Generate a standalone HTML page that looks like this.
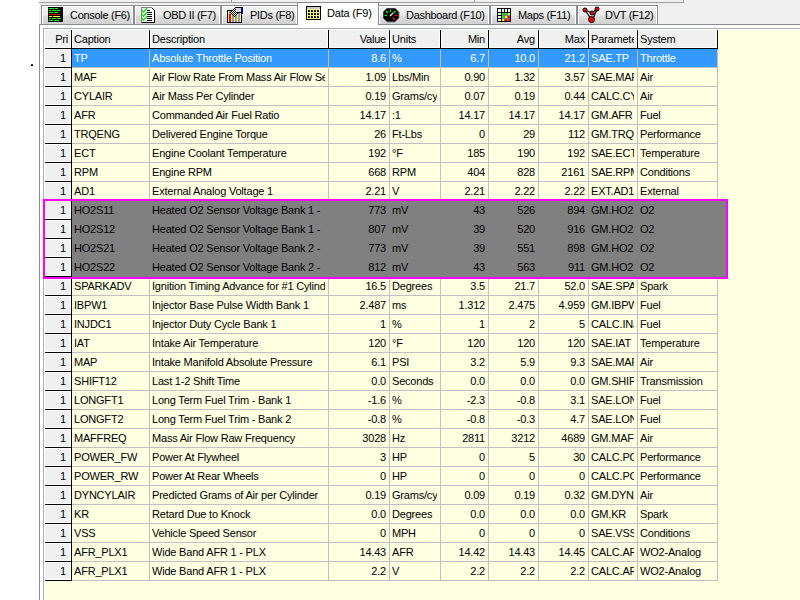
<!DOCTYPE html><html><head><meta charset="utf-8"><style>
*{margin:0;padding:0;box-sizing:border-box}
html,body{width:800px;height:600px;overflow:hidden;background:#fff}
body{position:relative;font-family:"Liberation Sans",sans-serif;font-size:11px;color:#000}
.a{position:absolute}
.t{position:absolute;white-space:nowrap;overflow:hidden;line-height:13px;height:13px;letter-spacing:-0.2px}
.r{text-align:right}
.fx{position:absolute;background:#f0f0f0;border-top:1px solid #fff;border-left:1px solid #fff;border-right:1px solid #fff;border-bottom:1px solid #fff}
.tab{position:absolute;top:5px;height:20px;border:1px solid #898c95;border-bottom:none;background:linear-gradient(#f2f2f2 0,#ebebeb 45%,#dddddd 55%,#cfcfcf 100%)}
.tab i{position:absolute;left:0;top:0;right:0;bottom:0;border-top:1px solid #fff;border-left:1px solid #fff;border-right:1px solid #fff}
.tl{position:absolute;top:3px;white-space:nowrap;line-height:13px;letter-spacing:-0.3px}
</style></head><body>
<div class="a" style="left:39px;top:0;width:761px;height:24px;background:#f0f0f0"></div>
<div class="a" style="left:39px;top:2px;width:645px;height:1px;background:#a0a0a0"></div>
<div class="a" style="left:39px;top:0;width:1px;height:2px;background:#fff"></div>
<div class="a" style="left:231px;top:0;width:1px;height:3px;background:#a0a0a0"></div>
<div class="a" style="left:474px;top:0;width:1px;height:3px;background:#a0a0a0"></div>
<div class="a" style="left:683px;top:0;width:1px;height:3px;background:#a0a0a0"></div>
<div class="tab" style="left:41px;width:93px"><i></i><span class="tl" style="left:28px">Console (F6)</span></div>
<div class="tab" style="left:134px;width:87px"><i></i><span class="tl" style="left:28px">OBD II (F7)</span></div>
<div class="tab" style="left:221px;width:77px"><i></i><span class="tl" style="left:28px">PIDs (F8)</span></div>
<div class="tab" style="left:378px;width:112px"><i></i><span class="tl" style="left:27px">Dashboard (F10)</span></div>
<div class="tab" style="left:490px;width:87px"><i></i><span class="tl" style="left:27px">Maps (F11)</span></div>
<div class="tab" style="left:577px;width:81px"><i></i><span class="tl" style="left:27px">DVT (F12)</span></div>
<div class="a" style="left:297px;top:2px;width:82px;height:23px;background:#fff;border:1px solid #898c95;border-bottom:none"><span class="tl" style="left:29px;top:4px;letter-spacing:-0.2px">Data (F9)</span></div>
<div class="a" style="left:39px;top:24px;width:761px;height:576px;border-left:1px solid #898c95;border-top:1px solid #898c95;background:#fff"></div>
<div class="a" style="left:298px;top:24px;width:80px;height:1px;background:#fff"></div>
<div class="a" style="left:43px;top:28px;width:757px;height:572px;border-left:1px solid #abadb3;border-top:1px solid #abadb3;background:#ffffe1"></div>
<div class="a" style="left:44px;top:29px;width:756px;height:571px;border-left:1px solid #fff;border-top:1px solid #fff"></div>
<div class="fx" style="left:44px;top:29px;width:27px;height:19px"></div>
<div class="a" style="left:71px;top:30px;width:1px;height:19px;background:#000"></div>
<div class="fx" style="left:72px;top:29px;width:77px;height:19px"></div>
<div class="a" style="left:149px;top:30px;width:1px;height:19px;background:#000"></div>
<div class="fx" style="left:150px;top:29px;width:178px;height:19px"></div>
<div class="a" style="left:328px;top:30px;width:1px;height:19px;background:#000"></div>
<div class="fx" style="left:329px;top:29px;width:60px;height:19px"></div>
<div class="a" style="left:389px;top:30px;width:1px;height:19px;background:#000"></div>
<div class="fx" style="left:390px;top:29px;width:50px;height:19px"></div>
<div class="a" style="left:440px;top:30px;width:1px;height:19px;background:#000"></div>
<div class="fx" style="left:441px;top:29px;width:47px;height:19px"></div>
<div class="a" style="left:488px;top:30px;width:1px;height:19px;background:#000"></div>
<div class="fx" style="left:489px;top:29px;width:49px;height:19px"></div>
<div class="a" style="left:538px;top:30px;width:1px;height:19px;background:#000"></div>
<div class="fx" style="left:539px;top:29px;width:49px;height:19px"></div>
<div class="a" style="left:588px;top:30px;width:1px;height:19px;background:#000"></div>
<div class="fx" style="left:589px;top:29px;width:48px;height:19px"></div>
<div class="a" style="left:637px;top:30px;width:1px;height:19px;background:#000"></div>
<div class="fx" style="left:638px;top:29px;width:79px;height:19px"></div>
<div class="a" style="left:717px;top:30px;width:1px;height:19px;background:#000"></div>
<div class="a" style="left:45px;top:48px;width:673px;height:1px;background:#000"></div>
<div class="a" style="left:44px;top:29px;width:673px;height:1px;background:#fff"></div>
<div class="fx" style="left:44px;top:49px;width:27px;height:18px"></div>
<div class="a" style="left:45px;top:67px;width:27px;height:1px;background:#000"></div>
<div class="a" style="left:71px;top:49px;width:1px;height:18px;background:#000"></div>
<div class="a" style="left:72px;top:49px;width:645px;height:18px;background:#3399ff"></div>
<div class="a" style="left:72px;top:67px;width:646px;height:1px;background:#c0c0c0"></div>
<div class="a" style="left:149px;top:49px;width:1px;height:18px;background:#c0c0c0"></div>
<div class="a" style="left:328px;top:49px;width:1px;height:18px;background:#c0c0c0"></div>
<div class="a" style="left:389px;top:49px;width:1px;height:18px;background:#c0c0c0"></div>
<div class="a" style="left:440px;top:49px;width:1px;height:18px;background:#c0c0c0"></div>
<div class="a" style="left:488px;top:49px;width:1px;height:18px;background:#c0c0c0"></div>
<div class="a" style="left:538px;top:49px;width:1px;height:18px;background:#c0c0c0"></div>
<div class="a" style="left:588px;top:49px;width:1px;height:18px;background:#c0c0c0"></div>
<div class="a" style="left:637px;top:49px;width:1px;height:18px;background:#c0c0c0"></div>
<div class="a" style="left:717px;top:49px;width:1px;height:18px;background:#c0c0c0"></div>
<div class="fx" style="left:44px;top:68px;width:27px;height:18px"></div>
<div class="a" style="left:45px;top:86px;width:27px;height:1px;background:#000"></div>
<div class="a" style="left:71px;top:68px;width:1px;height:18px;background:#000"></div>
<div class="a" style="left:72px;top:86px;width:646px;height:1px;background:#c0c0c0"></div>
<div class="a" style="left:149px;top:68px;width:1px;height:18px;background:#c0c0c0"></div>
<div class="a" style="left:328px;top:68px;width:1px;height:18px;background:#c0c0c0"></div>
<div class="a" style="left:389px;top:68px;width:1px;height:18px;background:#c0c0c0"></div>
<div class="a" style="left:440px;top:68px;width:1px;height:18px;background:#c0c0c0"></div>
<div class="a" style="left:488px;top:68px;width:1px;height:18px;background:#c0c0c0"></div>
<div class="a" style="left:538px;top:68px;width:1px;height:18px;background:#c0c0c0"></div>
<div class="a" style="left:588px;top:68px;width:1px;height:18px;background:#c0c0c0"></div>
<div class="a" style="left:637px;top:68px;width:1px;height:18px;background:#c0c0c0"></div>
<div class="a" style="left:717px;top:68px;width:1px;height:18px;background:#c0c0c0"></div>
<div class="fx" style="left:44px;top:87px;width:27px;height:18px"></div>
<div class="a" style="left:45px;top:105px;width:27px;height:1px;background:#000"></div>
<div class="a" style="left:71px;top:87px;width:1px;height:18px;background:#000"></div>
<div class="a" style="left:72px;top:105px;width:646px;height:1px;background:#c0c0c0"></div>
<div class="a" style="left:149px;top:87px;width:1px;height:18px;background:#c0c0c0"></div>
<div class="a" style="left:328px;top:87px;width:1px;height:18px;background:#c0c0c0"></div>
<div class="a" style="left:389px;top:87px;width:1px;height:18px;background:#c0c0c0"></div>
<div class="a" style="left:440px;top:87px;width:1px;height:18px;background:#c0c0c0"></div>
<div class="a" style="left:488px;top:87px;width:1px;height:18px;background:#c0c0c0"></div>
<div class="a" style="left:538px;top:87px;width:1px;height:18px;background:#c0c0c0"></div>
<div class="a" style="left:588px;top:87px;width:1px;height:18px;background:#c0c0c0"></div>
<div class="a" style="left:637px;top:87px;width:1px;height:18px;background:#c0c0c0"></div>
<div class="a" style="left:717px;top:87px;width:1px;height:18px;background:#c0c0c0"></div>
<div class="fx" style="left:44px;top:106px;width:27px;height:18px"></div>
<div class="a" style="left:45px;top:124px;width:27px;height:1px;background:#000"></div>
<div class="a" style="left:71px;top:106px;width:1px;height:18px;background:#000"></div>
<div class="a" style="left:72px;top:124px;width:646px;height:1px;background:#c0c0c0"></div>
<div class="a" style="left:149px;top:106px;width:1px;height:18px;background:#c0c0c0"></div>
<div class="a" style="left:328px;top:106px;width:1px;height:18px;background:#c0c0c0"></div>
<div class="a" style="left:389px;top:106px;width:1px;height:18px;background:#c0c0c0"></div>
<div class="a" style="left:440px;top:106px;width:1px;height:18px;background:#c0c0c0"></div>
<div class="a" style="left:488px;top:106px;width:1px;height:18px;background:#c0c0c0"></div>
<div class="a" style="left:538px;top:106px;width:1px;height:18px;background:#c0c0c0"></div>
<div class="a" style="left:588px;top:106px;width:1px;height:18px;background:#c0c0c0"></div>
<div class="a" style="left:637px;top:106px;width:1px;height:18px;background:#c0c0c0"></div>
<div class="a" style="left:717px;top:106px;width:1px;height:18px;background:#c0c0c0"></div>
<div class="fx" style="left:44px;top:125px;width:27px;height:18px"></div>
<div class="a" style="left:45px;top:143px;width:27px;height:1px;background:#000"></div>
<div class="a" style="left:71px;top:125px;width:1px;height:18px;background:#000"></div>
<div class="a" style="left:72px;top:143px;width:646px;height:1px;background:#c0c0c0"></div>
<div class="a" style="left:149px;top:125px;width:1px;height:18px;background:#c0c0c0"></div>
<div class="a" style="left:328px;top:125px;width:1px;height:18px;background:#c0c0c0"></div>
<div class="a" style="left:389px;top:125px;width:1px;height:18px;background:#c0c0c0"></div>
<div class="a" style="left:440px;top:125px;width:1px;height:18px;background:#c0c0c0"></div>
<div class="a" style="left:488px;top:125px;width:1px;height:18px;background:#c0c0c0"></div>
<div class="a" style="left:538px;top:125px;width:1px;height:18px;background:#c0c0c0"></div>
<div class="a" style="left:588px;top:125px;width:1px;height:18px;background:#c0c0c0"></div>
<div class="a" style="left:637px;top:125px;width:1px;height:18px;background:#c0c0c0"></div>
<div class="a" style="left:717px;top:125px;width:1px;height:18px;background:#c0c0c0"></div>
<div class="fx" style="left:44px;top:144px;width:27px;height:18px"></div>
<div class="a" style="left:45px;top:162px;width:27px;height:1px;background:#000"></div>
<div class="a" style="left:71px;top:144px;width:1px;height:18px;background:#000"></div>
<div class="a" style="left:72px;top:162px;width:646px;height:1px;background:#c0c0c0"></div>
<div class="a" style="left:149px;top:144px;width:1px;height:18px;background:#c0c0c0"></div>
<div class="a" style="left:328px;top:144px;width:1px;height:18px;background:#c0c0c0"></div>
<div class="a" style="left:389px;top:144px;width:1px;height:18px;background:#c0c0c0"></div>
<div class="a" style="left:440px;top:144px;width:1px;height:18px;background:#c0c0c0"></div>
<div class="a" style="left:488px;top:144px;width:1px;height:18px;background:#c0c0c0"></div>
<div class="a" style="left:538px;top:144px;width:1px;height:18px;background:#c0c0c0"></div>
<div class="a" style="left:588px;top:144px;width:1px;height:18px;background:#c0c0c0"></div>
<div class="a" style="left:637px;top:144px;width:1px;height:18px;background:#c0c0c0"></div>
<div class="a" style="left:717px;top:144px;width:1px;height:18px;background:#c0c0c0"></div>
<div class="fx" style="left:44px;top:163px;width:27px;height:18px"></div>
<div class="a" style="left:45px;top:181px;width:27px;height:1px;background:#000"></div>
<div class="a" style="left:71px;top:163px;width:1px;height:18px;background:#000"></div>
<div class="a" style="left:72px;top:181px;width:646px;height:1px;background:#c0c0c0"></div>
<div class="a" style="left:149px;top:163px;width:1px;height:18px;background:#c0c0c0"></div>
<div class="a" style="left:328px;top:163px;width:1px;height:18px;background:#c0c0c0"></div>
<div class="a" style="left:389px;top:163px;width:1px;height:18px;background:#c0c0c0"></div>
<div class="a" style="left:440px;top:163px;width:1px;height:18px;background:#c0c0c0"></div>
<div class="a" style="left:488px;top:163px;width:1px;height:18px;background:#c0c0c0"></div>
<div class="a" style="left:538px;top:163px;width:1px;height:18px;background:#c0c0c0"></div>
<div class="a" style="left:588px;top:163px;width:1px;height:18px;background:#c0c0c0"></div>
<div class="a" style="left:637px;top:163px;width:1px;height:18px;background:#c0c0c0"></div>
<div class="a" style="left:717px;top:163px;width:1px;height:18px;background:#c0c0c0"></div>
<div class="fx" style="left:44px;top:182px;width:27px;height:18px"></div>
<div class="a" style="left:45px;top:200px;width:27px;height:1px;background:#000"></div>
<div class="a" style="left:71px;top:182px;width:1px;height:18px;background:#000"></div>
<div class="a" style="left:72px;top:200px;width:646px;height:1px;background:#c0c0c0"></div>
<div class="a" style="left:149px;top:182px;width:1px;height:18px;background:#c0c0c0"></div>
<div class="a" style="left:328px;top:182px;width:1px;height:18px;background:#c0c0c0"></div>
<div class="a" style="left:389px;top:182px;width:1px;height:18px;background:#c0c0c0"></div>
<div class="a" style="left:440px;top:182px;width:1px;height:18px;background:#c0c0c0"></div>
<div class="a" style="left:488px;top:182px;width:1px;height:18px;background:#c0c0c0"></div>
<div class="a" style="left:538px;top:182px;width:1px;height:18px;background:#c0c0c0"></div>
<div class="a" style="left:588px;top:182px;width:1px;height:18px;background:#c0c0c0"></div>
<div class="a" style="left:637px;top:182px;width:1px;height:18px;background:#c0c0c0"></div>
<div class="a" style="left:717px;top:182px;width:1px;height:18px;background:#c0c0c0"></div>
<div class="fx" style="left:44px;top:201px;width:27px;height:18px"></div>
<div class="a" style="left:45px;top:219px;width:27px;height:1px;background:#000"></div>
<div class="a" style="left:71px;top:201px;width:1px;height:18px;background:#000"></div>
<div class="a" style="left:72px;top:201px;width:654px;height:19px;background:#808080"></div>
<div class="fx" style="left:44px;top:220px;width:27px;height:18px"></div>
<div class="a" style="left:45px;top:238px;width:27px;height:1px;background:#000"></div>
<div class="a" style="left:71px;top:220px;width:1px;height:18px;background:#000"></div>
<div class="a" style="left:72px;top:220px;width:654px;height:19px;background:#808080"></div>
<div class="fx" style="left:44px;top:239px;width:27px;height:18px"></div>
<div class="a" style="left:45px;top:257px;width:27px;height:1px;background:#000"></div>
<div class="a" style="left:71px;top:239px;width:1px;height:18px;background:#000"></div>
<div class="a" style="left:72px;top:239px;width:654px;height:19px;background:#808080"></div>
<div class="fx" style="left:44px;top:258px;width:27px;height:18px"></div>
<div class="a" style="left:45px;top:276px;width:27px;height:1px;background:#000"></div>
<div class="a" style="left:71px;top:258px;width:1px;height:18px;background:#000"></div>
<div class="a" style="left:72px;top:258px;width:654px;height:19px;background:#808080"></div>
<div class="fx" style="left:44px;top:277px;width:27px;height:18px"></div>
<div class="a" style="left:45px;top:295px;width:27px;height:1px;background:#000"></div>
<div class="a" style="left:71px;top:277px;width:1px;height:18px;background:#000"></div>
<div class="a" style="left:72px;top:295px;width:646px;height:1px;background:#c0c0c0"></div>
<div class="a" style="left:149px;top:277px;width:1px;height:18px;background:#c0c0c0"></div>
<div class="a" style="left:328px;top:277px;width:1px;height:18px;background:#c0c0c0"></div>
<div class="a" style="left:389px;top:277px;width:1px;height:18px;background:#c0c0c0"></div>
<div class="a" style="left:440px;top:277px;width:1px;height:18px;background:#c0c0c0"></div>
<div class="a" style="left:488px;top:277px;width:1px;height:18px;background:#c0c0c0"></div>
<div class="a" style="left:538px;top:277px;width:1px;height:18px;background:#c0c0c0"></div>
<div class="a" style="left:588px;top:277px;width:1px;height:18px;background:#c0c0c0"></div>
<div class="a" style="left:637px;top:277px;width:1px;height:18px;background:#c0c0c0"></div>
<div class="a" style="left:717px;top:277px;width:1px;height:18px;background:#c0c0c0"></div>
<div class="fx" style="left:44px;top:296px;width:27px;height:18px"></div>
<div class="a" style="left:45px;top:314px;width:27px;height:1px;background:#000"></div>
<div class="a" style="left:71px;top:296px;width:1px;height:18px;background:#000"></div>
<div class="a" style="left:72px;top:314px;width:646px;height:1px;background:#c0c0c0"></div>
<div class="a" style="left:149px;top:296px;width:1px;height:18px;background:#c0c0c0"></div>
<div class="a" style="left:328px;top:296px;width:1px;height:18px;background:#c0c0c0"></div>
<div class="a" style="left:389px;top:296px;width:1px;height:18px;background:#c0c0c0"></div>
<div class="a" style="left:440px;top:296px;width:1px;height:18px;background:#c0c0c0"></div>
<div class="a" style="left:488px;top:296px;width:1px;height:18px;background:#c0c0c0"></div>
<div class="a" style="left:538px;top:296px;width:1px;height:18px;background:#c0c0c0"></div>
<div class="a" style="left:588px;top:296px;width:1px;height:18px;background:#c0c0c0"></div>
<div class="a" style="left:637px;top:296px;width:1px;height:18px;background:#c0c0c0"></div>
<div class="a" style="left:717px;top:296px;width:1px;height:18px;background:#c0c0c0"></div>
<div class="fx" style="left:44px;top:315px;width:27px;height:18px"></div>
<div class="a" style="left:45px;top:333px;width:27px;height:1px;background:#000"></div>
<div class="a" style="left:71px;top:315px;width:1px;height:18px;background:#000"></div>
<div class="a" style="left:72px;top:333px;width:646px;height:1px;background:#c0c0c0"></div>
<div class="a" style="left:149px;top:315px;width:1px;height:18px;background:#c0c0c0"></div>
<div class="a" style="left:328px;top:315px;width:1px;height:18px;background:#c0c0c0"></div>
<div class="a" style="left:389px;top:315px;width:1px;height:18px;background:#c0c0c0"></div>
<div class="a" style="left:440px;top:315px;width:1px;height:18px;background:#c0c0c0"></div>
<div class="a" style="left:488px;top:315px;width:1px;height:18px;background:#c0c0c0"></div>
<div class="a" style="left:538px;top:315px;width:1px;height:18px;background:#c0c0c0"></div>
<div class="a" style="left:588px;top:315px;width:1px;height:18px;background:#c0c0c0"></div>
<div class="a" style="left:637px;top:315px;width:1px;height:18px;background:#c0c0c0"></div>
<div class="a" style="left:717px;top:315px;width:1px;height:18px;background:#c0c0c0"></div>
<div class="fx" style="left:44px;top:334px;width:27px;height:18px"></div>
<div class="a" style="left:45px;top:352px;width:27px;height:1px;background:#000"></div>
<div class="a" style="left:71px;top:334px;width:1px;height:18px;background:#000"></div>
<div class="a" style="left:72px;top:352px;width:646px;height:1px;background:#c0c0c0"></div>
<div class="a" style="left:149px;top:334px;width:1px;height:18px;background:#c0c0c0"></div>
<div class="a" style="left:328px;top:334px;width:1px;height:18px;background:#c0c0c0"></div>
<div class="a" style="left:389px;top:334px;width:1px;height:18px;background:#c0c0c0"></div>
<div class="a" style="left:440px;top:334px;width:1px;height:18px;background:#c0c0c0"></div>
<div class="a" style="left:488px;top:334px;width:1px;height:18px;background:#c0c0c0"></div>
<div class="a" style="left:538px;top:334px;width:1px;height:18px;background:#c0c0c0"></div>
<div class="a" style="left:588px;top:334px;width:1px;height:18px;background:#c0c0c0"></div>
<div class="a" style="left:637px;top:334px;width:1px;height:18px;background:#c0c0c0"></div>
<div class="a" style="left:717px;top:334px;width:1px;height:18px;background:#c0c0c0"></div>
<div class="fx" style="left:44px;top:353px;width:27px;height:18px"></div>
<div class="a" style="left:45px;top:371px;width:27px;height:1px;background:#000"></div>
<div class="a" style="left:71px;top:353px;width:1px;height:18px;background:#000"></div>
<div class="a" style="left:72px;top:371px;width:646px;height:1px;background:#c0c0c0"></div>
<div class="a" style="left:149px;top:353px;width:1px;height:18px;background:#c0c0c0"></div>
<div class="a" style="left:328px;top:353px;width:1px;height:18px;background:#c0c0c0"></div>
<div class="a" style="left:389px;top:353px;width:1px;height:18px;background:#c0c0c0"></div>
<div class="a" style="left:440px;top:353px;width:1px;height:18px;background:#c0c0c0"></div>
<div class="a" style="left:488px;top:353px;width:1px;height:18px;background:#c0c0c0"></div>
<div class="a" style="left:538px;top:353px;width:1px;height:18px;background:#c0c0c0"></div>
<div class="a" style="left:588px;top:353px;width:1px;height:18px;background:#c0c0c0"></div>
<div class="a" style="left:637px;top:353px;width:1px;height:18px;background:#c0c0c0"></div>
<div class="a" style="left:717px;top:353px;width:1px;height:18px;background:#c0c0c0"></div>
<div class="fx" style="left:44px;top:372px;width:27px;height:18px"></div>
<div class="a" style="left:45px;top:390px;width:27px;height:1px;background:#000"></div>
<div class="a" style="left:71px;top:372px;width:1px;height:18px;background:#000"></div>
<div class="a" style="left:72px;top:390px;width:646px;height:1px;background:#c0c0c0"></div>
<div class="a" style="left:149px;top:372px;width:1px;height:18px;background:#c0c0c0"></div>
<div class="a" style="left:328px;top:372px;width:1px;height:18px;background:#c0c0c0"></div>
<div class="a" style="left:389px;top:372px;width:1px;height:18px;background:#c0c0c0"></div>
<div class="a" style="left:440px;top:372px;width:1px;height:18px;background:#c0c0c0"></div>
<div class="a" style="left:488px;top:372px;width:1px;height:18px;background:#c0c0c0"></div>
<div class="a" style="left:538px;top:372px;width:1px;height:18px;background:#c0c0c0"></div>
<div class="a" style="left:588px;top:372px;width:1px;height:18px;background:#c0c0c0"></div>
<div class="a" style="left:637px;top:372px;width:1px;height:18px;background:#c0c0c0"></div>
<div class="a" style="left:717px;top:372px;width:1px;height:18px;background:#c0c0c0"></div>
<div class="fx" style="left:44px;top:391px;width:27px;height:18px"></div>
<div class="a" style="left:45px;top:409px;width:27px;height:1px;background:#000"></div>
<div class="a" style="left:71px;top:391px;width:1px;height:18px;background:#000"></div>
<div class="a" style="left:72px;top:409px;width:646px;height:1px;background:#c0c0c0"></div>
<div class="a" style="left:149px;top:391px;width:1px;height:18px;background:#c0c0c0"></div>
<div class="a" style="left:328px;top:391px;width:1px;height:18px;background:#c0c0c0"></div>
<div class="a" style="left:389px;top:391px;width:1px;height:18px;background:#c0c0c0"></div>
<div class="a" style="left:440px;top:391px;width:1px;height:18px;background:#c0c0c0"></div>
<div class="a" style="left:488px;top:391px;width:1px;height:18px;background:#c0c0c0"></div>
<div class="a" style="left:538px;top:391px;width:1px;height:18px;background:#c0c0c0"></div>
<div class="a" style="left:588px;top:391px;width:1px;height:18px;background:#c0c0c0"></div>
<div class="a" style="left:637px;top:391px;width:1px;height:18px;background:#c0c0c0"></div>
<div class="a" style="left:717px;top:391px;width:1px;height:18px;background:#c0c0c0"></div>
<div class="fx" style="left:44px;top:410px;width:27px;height:18px"></div>
<div class="a" style="left:45px;top:428px;width:27px;height:1px;background:#000"></div>
<div class="a" style="left:71px;top:410px;width:1px;height:18px;background:#000"></div>
<div class="a" style="left:72px;top:428px;width:646px;height:1px;background:#c0c0c0"></div>
<div class="a" style="left:149px;top:410px;width:1px;height:18px;background:#c0c0c0"></div>
<div class="a" style="left:328px;top:410px;width:1px;height:18px;background:#c0c0c0"></div>
<div class="a" style="left:389px;top:410px;width:1px;height:18px;background:#c0c0c0"></div>
<div class="a" style="left:440px;top:410px;width:1px;height:18px;background:#c0c0c0"></div>
<div class="a" style="left:488px;top:410px;width:1px;height:18px;background:#c0c0c0"></div>
<div class="a" style="left:538px;top:410px;width:1px;height:18px;background:#c0c0c0"></div>
<div class="a" style="left:588px;top:410px;width:1px;height:18px;background:#c0c0c0"></div>
<div class="a" style="left:637px;top:410px;width:1px;height:18px;background:#c0c0c0"></div>
<div class="a" style="left:717px;top:410px;width:1px;height:18px;background:#c0c0c0"></div>
<div class="fx" style="left:44px;top:429px;width:27px;height:18px"></div>
<div class="a" style="left:45px;top:447px;width:27px;height:1px;background:#000"></div>
<div class="a" style="left:71px;top:429px;width:1px;height:18px;background:#000"></div>
<div class="a" style="left:72px;top:447px;width:646px;height:1px;background:#c0c0c0"></div>
<div class="a" style="left:149px;top:429px;width:1px;height:18px;background:#c0c0c0"></div>
<div class="a" style="left:328px;top:429px;width:1px;height:18px;background:#c0c0c0"></div>
<div class="a" style="left:389px;top:429px;width:1px;height:18px;background:#c0c0c0"></div>
<div class="a" style="left:440px;top:429px;width:1px;height:18px;background:#c0c0c0"></div>
<div class="a" style="left:488px;top:429px;width:1px;height:18px;background:#c0c0c0"></div>
<div class="a" style="left:538px;top:429px;width:1px;height:18px;background:#c0c0c0"></div>
<div class="a" style="left:588px;top:429px;width:1px;height:18px;background:#c0c0c0"></div>
<div class="a" style="left:637px;top:429px;width:1px;height:18px;background:#c0c0c0"></div>
<div class="a" style="left:717px;top:429px;width:1px;height:18px;background:#c0c0c0"></div>
<div class="fx" style="left:44px;top:448px;width:27px;height:18px"></div>
<div class="a" style="left:45px;top:466px;width:27px;height:1px;background:#000"></div>
<div class="a" style="left:71px;top:448px;width:1px;height:18px;background:#000"></div>
<div class="a" style="left:72px;top:466px;width:646px;height:1px;background:#c0c0c0"></div>
<div class="a" style="left:149px;top:448px;width:1px;height:18px;background:#c0c0c0"></div>
<div class="a" style="left:328px;top:448px;width:1px;height:18px;background:#c0c0c0"></div>
<div class="a" style="left:389px;top:448px;width:1px;height:18px;background:#c0c0c0"></div>
<div class="a" style="left:440px;top:448px;width:1px;height:18px;background:#c0c0c0"></div>
<div class="a" style="left:488px;top:448px;width:1px;height:18px;background:#c0c0c0"></div>
<div class="a" style="left:538px;top:448px;width:1px;height:18px;background:#c0c0c0"></div>
<div class="a" style="left:588px;top:448px;width:1px;height:18px;background:#c0c0c0"></div>
<div class="a" style="left:637px;top:448px;width:1px;height:18px;background:#c0c0c0"></div>
<div class="a" style="left:717px;top:448px;width:1px;height:18px;background:#c0c0c0"></div>
<div class="fx" style="left:44px;top:467px;width:27px;height:18px"></div>
<div class="a" style="left:45px;top:485px;width:27px;height:1px;background:#000"></div>
<div class="a" style="left:71px;top:467px;width:1px;height:18px;background:#000"></div>
<div class="a" style="left:72px;top:485px;width:646px;height:1px;background:#c0c0c0"></div>
<div class="a" style="left:149px;top:467px;width:1px;height:18px;background:#c0c0c0"></div>
<div class="a" style="left:328px;top:467px;width:1px;height:18px;background:#c0c0c0"></div>
<div class="a" style="left:389px;top:467px;width:1px;height:18px;background:#c0c0c0"></div>
<div class="a" style="left:440px;top:467px;width:1px;height:18px;background:#c0c0c0"></div>
<div class="a" style="left:488px;top:467px;width:1px;height:18px;background:#c0c0c0"></div>
<div class="a" style="left:538px;top:467px;width:1px;height:18px;background:#c0c0c0"></div>
<div class="a" style="left:588px;top:467px;width:1px;height:18px;background:#c0c0c0"></div>
<div class="a" style="left:637px;top:467px;width:1px;height:18px;background:#c0c0c0"></div>
<div class="a" style="left:717px;top:467px;width:1px;height:18px;background:#c0c0c0"></div>
<div class="fx" style="left:44px;top:486px;width:27px;height:18px"></div>
<div class="a" style="left:45px;top:504px;width:27px;height:1px;background:#000"></div>
<div class="a" style="left:71px;top:486px;width:1px;height:18px;background:#000"></div>
<div class="a" style="left:72px;top:504px;width:646px;height:1px;background:#c0c0c0"></div>
<div class="a" style="left:149px;top:486px;width:1px;height:18px;background:#c0c0c0"></div>
<div class="a" style="left:328px;top:486px;width:1px;height:18px;background:#c0c0c0"></div>
<div class="a" style="left:389px;top:486px;width:1px;height:18px;background:#c0c0c0"></div>
<div class="a" style="left:440px;top:486px;width:1px;height:18px;background:#c0c0c0"></div>
<div class="a" style="left:488px;top:486px;width:1px;height:18px;background:#c0c0c0"></div>
<div class="a" style="left:538px;top:486px;width:1px;height:18px;background:#c0c0c0"></div>
<div class="a" style="left:588px;top:486px;width:1px;height:18px;background:#c0c0c0"></div>
<div class="a" style="left:637px;top:486px;width:1px;height:18px;background:#c0c0c0"></div>
<div class="a" style="left:717px;top:486px;width:1px;height:18px;background:#c0c0c0"></div>
<div class="fx" style="left:44px;top:505px;width:27px;height:18px"></div>
<div class="a" style="left:45px;top:523px;width:27px;height:1px;background:#000"></div>
<div class="a" style="left:71px;top:505px;width:1px;height:18px;background:#000"></div>
<div class="a" style="left:72px;top:523px;width:646px;height:1px;background:#c0c0c0"></div>
<div class="a" style="left:149px;top:505px;width:1px;height:18px;background:#c0c0c0"></div>
<div class="a" style="left:328px;top:505px;width:1px;height:18px;background:#c0c0c0"></div>
<div class="a" style="left:389px;top:505px;width:1px;height:18px;background:#c0c0c0"></div>
<div class="a" style="left:440px;top:505px;width:1px;height:18px;background:#c0c0c0"></div>
<div class="a" style="left:488px;top:505px;width:1px;height:18px;background:#c0c0c0"></div>
<div class="a" style="left:538px;top:505px;width:1px;height:18px;background:#c0c0c0"></div>
<div class="a" style="left:588px;top:505px;width:1px;height:18px;background:#c0c0c0"></div>
<div class="a" style="left:637px;top:505px;width:1px;height:18px;background:#c0c0c0"></div>
<div class="a" style="left:717px;top:505px;width:1px;height:18px;background:#c0c0c0"></div>
<div class="fx" style="left:44px;top:524px;width:27px;height:18px"></div>
<div class="a" style="left:45px;top:542px;width:27px;height:1px;background:#000"></div>
<div class="a" style="left:71px;top:524px;width:1px;height:18px;background:#000"></div>
<div class="a" style="left:72px;top:542px;width:646px;height:1px;background:#c0c0c0"></div>
<div class="a" style="left:149px;top:524px;width:1px;height:18px;background:#c0c0c0"></div>
<div class="a" style="left:328px;top:524px;width:1px;height:18px;background:#c0c0c0"></div>
<div class="a" style="left:389px;top:524px;width:1px;height:18px;background:#c0c0c0"></div>
<div class="a" style="left:440px;top:524px;width:1px;height:18px;background:#c0c0c0"></div>
<div class="a" style="left:488px;top:524px;width:1px;height:18px;background:#c0c0c0"></div>
<div class="a" style="left:538px;top:524px;width:1px;height:18px;background:#c0c0c0"></div>
<div class="a" style="left:588px;top:524px;width:1px;height:18px;background:#c0c0c0"></div>
<div class="a" style="left:637px;top:524px;width:1px;height:18px;background:#c0c0c0"></div>
<div class="a" style="left:717px;top:524px;width:1px;height:18px;background:#c0c0c0"></div>
<div class="fx" style="left:44px;top:543px;width:27px;height:18px"></div>
<div class="a" style="left:45px;top:561px;width:27px;height:1px;background:#000"></div>
<div class="a" style="left:71px;top:543px;width:1px;height:18px;background:#000"></div>
<div class="a" style="left:72px;top:561px;width:646px;height:1px;background:#c0c0c0"></div>
<div class="a" style="left:149px;top:543px;width:1px;height:18px;background:#c0c0c0"></div>
<div class="a" style="left:328px;top:543px;width:1px;height:18px;background:#c0c0c0"></div>
<div class="a" style="left:389px;top:543px;width:1px;height:18px;background:#c0c0c0"></div>
<div class="a" style="left:440px;top:543px;width:1px;height:18px;background:#c0c0c0"></div>
<div class="a" style="left:488px;top:543px;width:1px;height:18px;background:#c0c0c0"></div>
<div class="a" style="left:538px;top:543px;width:1px;height:18px;background:#c0c0c0"></div>
<div class="a" style="left:588px;top:543px;width:1px;height:18px;background:#c0c0c0"></div>
<div class="a" style="left:637px;top:543px;width:1px;height:18px;background:#c0c0c0"></div>
<div class="a" style="left:717px;top:543px;width:1px;height:18px;background:#c0c0c0"></div>
<div class="fx" style="left:44px;top:562px;width:27px;height:18px"></div>
<div class="a" style="left:45px;top:580px;width:27px;height:1px;background:#000"></div>
<div class="a" style="left:71px;top:562px;width:1px;height:18px;background:#000"></div>
<div class="a" style="left:72px;top:580px;width:646px;height:1px;background:#c0c0c0"></div>
<div class="a" style="left:149px;top:562px;width:1px;height:18px;background:#c0c0c0"></div>
<div class="a" style="left:328px;top:562px;width:1px;height:18px;background:#c0c0c0"></div>
<div class="a" style="left:389px;top:562px;width:1px;height:18px;background:#c0c0c0"></div>
<div class="a" style="left:440px;top:562px;width:1px;height:18px;background:#c0c0c0"></div>
<div class="a" style="left:488px;top:562px;width:1px;height:18px;background:#c0c0c0"></div>
<div class="a" style="left:538px;top:562px;width:1px;height:18px;background:#c0c0c0"></div>
<div class="a" style="left:588px;top:562px;width:1px;height:18px;background:#c0c0c0"></div>
<div class="a" style="left:637px;top:562px;width:1px;height:18px;background:#c0c0c0"></div>
<div class="a" style="left:717px;top:562px;width:1px;height:18px;background:#c0c0c0"></div>
<div class="a" style="left:43px;top:199px;width:685px;height:80px;border:2px solid #ff00ff"></div>
<div class="t r" style="left:44px;top:33px;width:24px;color:#000">Pri</div>
<div class="t" style="left:74px;top:33px;width:72px;color:#000">Caption</div>
<div class="t" style="left:152px;top:33px;width:173px;color:#000">Description</div>
<div class="t r" style="left:329px;top:33px;width:57px;color:#000">Value</div>
<div class="t" style="left:392px;top:33px;width:45px;color:#000">Units</div>
<div class="t r" style="left:441px;top:33px;width:44px;color:#000">Min</div>
<div class="t r" style="left:489px;top:33px;width:46px;color:#000">Avg</div>
<div class="t r" style="left:539px;top:33px;width:46px;color:#000">Max</div>
<div class="t" style="left:591px;top:33px;width:43px;color:#000">Parameter</div>
<div class="t" style="left:640px;top:33px;width:74px;color:#000">System</div>
<div class="t r" style="left:44px;top:52px;width:22px">1</div>
<div class="t" style="left:74px;top:52px;width:72px;color:#fff">TP</div>
<div class="t" style="left:152px;top:52px;width:173px;color:#fff">Absolute Throttle Position</div>
<div class="t r" style="left:329px;top:52px;width:57px;color:#fff">8.6</div>
<div class="t" style="left:392px;top:52px;width:45px;color:#fff">%</div>
<div class="t r" style="left:441px;top:52px;width:44px;color:#fff">6.7</div>
<div class="t r" style="left:489px;top:52px;width:46px;color:#fff">10.0</div>
<div class="t r" style="left:539px;top:52px;width:46px;color:#fff">21.2</div>
<div class="t" style="left:591px;top:52px;width:43px;color:#fff">SAE.TP</div>
<div class="t" style="left:640px;top:52px;width:74px;color:#fff">Throttle</div>
<div class="t r" style="left:44px;top:71px;width:22px">1</div>
<div class="t" style="left:74px;top:71px;width:72px;color:#000">MAF</div>
<div class="t" style="left:152px;top:71px;width:173px;color:#000">Air Flow Rate From Mass Air Flow Sensor</div>
<div class="t r" style="left:329px;top:71px;width:57px;color:#000">1.09</div>
<div class="t" style="left:392px;top:71px;width:45px;color:#000">Lbs/Min</div>
<div class="t r" style="left:441px;top:71px;width:44px;color:#000">0.90</div>
<div class="t r" style="left:489px;top:71px;width:46px;color:#000">1.32</div>
<div class="t r" style="left:539px;top:71px;width:46px;color:#000">3.57</div>
<div class="t" style="left:591px;top:71px;width:43px;color:#000">SAE.MAF</div>
<div class="t" style="left:640px;top:71px;width:74px;color:#000">Air</div>
<div class="t r" style="left:44px;top:90px;width:22px">1</div>
<div class="t" style="left:74px;top:90px;width:72px;color:#000">CYLAIR</div>
<div class="t" style="left:152px;top:90px;width:173px;color:#000">Air Mass Per Cylinder</div>
<div class="t r" style="left:329px;top:90px;width:57px;color:#000">0.19</div>
<div class="t" style="left:392px;top:90px;width:45px;color:#000">Grams/cyl</div>
<div class="t r" style="left:441px;top:90px;width:44px;color:#000">0.07</div>
<div class="t r" style="left:489px;top:90px;width:46px;color:#000">0.19</div>
<div class="t r" style="left:539px;top:90px;width:46px;color:#000">0.44</div>
<div class="t" style="left:591px;top:90px;width:43px;color:#000">CALC.CYLAIR</div>
<div class="t" style="left:640px;top:90px;width:74px;color:#000">Air</div>
<div class="t r" style="left:44px;top:109px;width:22px">1</div>
<div class="t" style="left:74px;top:109px;width:72px;color:#000">AFR</div>
<div class="t" style="left:152px;top:109px;width:173px;color:#000">Commanded Air Fuel Ratio</div>
<div class="t r" style="left:329px;top:109px;width:57px;color:#000">14.17</div>
<div class="t" style="left:392px;top:109px;width:45px;color:#000">:1</div>
<div class="t r" style="left:441px;top:109px;width:44px;color:#000">14.17</div>
<div class="t r" style="left:489px;top:109px;width:46px;color:#000">14.17</div>
<div class="t r" style="left:539px;top:109px;width:46px;color:#000">14.17</div>
<div class="t" style="left:591px;top:109px;width:43px;color:#000">GM.AFR</div>
<div class="t" style="left:640px;top:109px;width:74px;color:#000">Fuel</div>
<div class="t r" style="left:44px;top:128px;width:22px">1</div>
<div class="t" style="left:74px;top:128px;width:72px;color:#000">TRQENG</div>
<div class="t" style="left:152px;top:128px;width:173px;color:#000">Delivered Engine Torque</div>
<div class="t r" style="left:329px;top:128px;width:57px;color:#000">26</div>
<div class="t" style="left:392px;top:128px;width:45px;color:#000">Ft-Lbs</div>
<div class="t r" style="left:441px;top:128px;width:44px;color:#000">0</div>
<div class="t r" style="left:489px;top:128px;width:46px;color:#000">29</div>
<div class="t r" style="left:539px;top:128px;width:46px;color:#000">112</div>
<div class="t" style="left:591px;top:128px;width:43px;color:#000">GM.TRQENG</div>
<div class="t" style="left:640px;top:128px;width:74px;color:#000">Performance</div>
<div class="t r" style="left:44px;top:147px;width:22px">1</div>
<div class="t" style="left:74px;top:147px;width:72px;color:#000">ECT</div>
<div class="t" style="left:152px;top:147px;width:173px;color:#000">Engine Coolant Temperature</div>
<div class="t r" style="left:329px;top:147px;width:57px;color:#000">192</div>
<div class="t" style="left:392px;top:147px;width:45px;color:#000">&deg;F</div>
<div class="t r" style="left:441px;top:147px;width:44px;color:#000">185</div>
<div class="t r" style="left:489px;top:147px;width:46px;color:#000">190</div>
<div class="t r" style="left:539px;top:147px;width:46px;color:#000">192</div>
<div class="t" style="left:591px;top:147px;width:43px;color:#000">SAE.ECT</div>
<div class="t" style="left:640px;top:147px;width:74px;color:#000">Temperature</div>
<div class="t r" style="left:44px;top:166px;width:22px">1</div>
<div class="t" style="left:74px;top:166px;width:72px;color:#000">RPM</div>
<div class="t" style="left:152px;top:166px;width:173px;color:#000">Engine RPM</div>
<div class="t r" style="left:329px;top:166px;width:57px;color:#000">668</div>
<div class="t" style="left:392px;top:166px;width:45px;color:#000">RPM</div>
<div class="t r" style="left:441px;top:166px;width:44px;color:#000">404</div>
<div class="t r" style="left:489px;top:166px;width:46px;color:#000">828</div>
<div class="t r" style="left:539px;top:166px;width:46px;color:#000">2161</div>
<div class="t" style="left:591px;top:166px;width:43px;color:#000">SAE.RPM</div>
<div class="t" style="left:640px;top:166px;width:74px;color:#000">Conditions</div>
<div class="t r" style="left:44px;top:185px;width:22px">1</div>
<div class="t" style="left:74px;top:185px;width:72px;color:#000">AD1</div>
<div class="t" style="left:152px;top:185px;width:173px;color:#000">External Analog Voltage 1</div>
<div class="t r" style="left:329px;top:185px;width:57px;color:#000">2.21</div>
<div class="t" style="left:392px;top:185px;width:45px;color:#000">V</div>
<div class="t r" style="left:441px;top:185px;width:44px;color:#000">2.21</div>
<div class="t r" style="left:489px;top:185px;width:46px;color:#000">2.22</div>
<div class="t r" style="left:539px;top:185px;width:46px;color:#000">2.22</div>
<div class="t" style="left:591px;top:185px;width:43px;color:#000">EXT.AD1</div>
<div class="t" style="left:640px;top:185px;width:74px;color:#000">External</div>
<div class="t r" style="left:44px;top:204px;width:22px">1</div>
<div class="t" style="left:74px;top:204px;width:72px;color:#000">HO2S11</div>
<div class="t" style="left:152px;top:204px;width:173px;color:#000">Heated O2 Sensor Voltage Bank 1 -</div>
<div class="t r" style="left:329px;top:204px;width:57px;color:#000">773</div>
<div class="t" style="left:392px;top:204px;width:45px;color:#000">mV</div>
<div class="t r" style="left:441px;top:204px;width:44px;color:#000">43</div>
<div class="t r" style="left:489px;top:204px;width:46px;color:#000">526</div>
<div class="t r" style="left:539px;top:204px;width:46px;color:#000">894</div>
<div class="t" style="left:591px;top:204px;width:43px;color:#000">GM.HO2S11</div>
<div class="t" style="left:640px;top:204px;width:74px;color:#000">O2</div>
<div class="t r" style="left:44px;top:223px;width:22px">1</div>
<div class="t" style="left:74px;top:223px;width:72px;color:#000">HO2S12</div>
<div class="t" style="left:152px;top:223px;width:173px;color:#000">Heated O2 Sensor Voltage Bank 1 -</div>
<div class="t r" style="left:329px;top:223px;width:57px;color:#000">807</div>
<div class="t" style="left:392px;top:223px;width:45px;color:#000">mV</div>
<div class="t r" style="left:441px;top:223px;width:44px;color:#000">39</div>
<div class="t r" style="left:489px;top:223px;width:46px;color:#000">520</div>
<div class="t r" style="left:539px;top:223px;width:46px;color:#000">916</div>
<div class="t" style="left:591px;top:223px;width:43px;color:#000">GM.HO2S12</div>
<div class="t" style="left:640px;top:223px;width:74px;color:#000">O2</div>
<div class="t r" style="left:44px;top:242px;width:22px">1</div>
<div class="t" style="left:74px;top:242px;width:72px;color:#000">HO2S21</div>
<div class="t" style="left:152px;top:242px;width:173px;color:#000">Heated O2 Sensor Voltage Bank 2 -</div>
<div class="t r" style="left:329px;top:242px;width:57px;color:#000">773</div>
<div class="t" style="left:392px;top:242px;width:45px;color:#000">mV</div>
<div class="t r" style="left:441px;top:242px;width:44px;color:#000">39</div>
<div class="t r" style="left:489px;top:242px;width:46px;color:#000">551</div>
<div class="t r" style="left:539px;top:242px;width:46px;color:#000">898</div>
<div class="t" style="left:591px;top:242px;width:43px;color:#000">GM.HO2S21</div>
<div class="t" style="left:640px;top:242px;width:74px;color:#000">O2</div>
<div class="t r" style="left:44px;top:261px;width:22px">1</div>
<div class="t" style="left:74px;top:261px;width:72px;color:#000">HO2S22</div>
<div class="t" style="left:152px;top:261px;width:173px;color:#000">Heated O2 Sensor Voltage Bank 2 -</div>
<div class="t r" style="left:329px;top:261px;width:57px;color:#000">812</div>
<div class="t" style="left:392px;top:261px;width:45px;color:#000">mV</div>
<div class="t r" style="left:441px;top:261px;width:44px;color:#000">43</div>
<div class="t r" style="left:489px;top:261px;width:46px;color:#000">563</div>
<div class="t r" style="left:539px;top:261px;width:46px;color:#000">911</div>
<div class="t" style="left:591px;top:261px;width:43px;color:#000">GM.HO2S22</div>
<div class="t" style="left:640px;top:261px;width:74px;color:#000">O2</div>
<div class="t r" style="left:44px;top:280px;width:22px">1</div>
<div class="t" style="left:74px;top:280px;width:72px;color:#000">SPARKADV</div>
<div class="t" style="left:152px;top:280px;width:173px;color:#000">Ignition Timing Advance for #1 Cylinder</div>
<div class="t r" style="left:329px;top:280px;width:57px;color:#000">16.5</div>
<div class="t" style="left:392px;top:280px;width:45px;color:#000">Degrees</div>
<div class="t r" style="left:441px;top:280px;width:44px;color:#000">3.5</div>
<div class="t r" style="left:489px;top:280px;width:46px;color:#000">21.7</div>
<div class="t r" style="left:539px;top:280px;width:46px;color:#000">52.0</div>
<div class="t" style="left:591px;top:280px;width:43px;color:#000">SAE.SPARKADV</div>
<div class="t" style="left:640px;top:280px;width:74px;color:#000">Spark</div>
<div class="t r" style="left:44px;top:299px;width:22px">1</div>
<div class="t" style="left:74px;top:299px;width:72px;color:#000">IBPW1</div>
<div class="t" style="left:152px;top:299px;width:173px;color:#000">Injector Base Pulse Width Bank 1</div>
<div class="t r" style="left:329px;top:299px;width:57px;color:#000">2.487</div>
<div class="t" style="left:392px;top:299px;width:45px;color:#000">ms</div>
<div class="t r" style="left:441px;top:299px;width:44px;color:#000">1.312</div>
<div class="t r" style="left:489px;top:299px;width:46px;color:#000">2.475</div>
<div class="t r" style="left:539px;top:299px;width:46px;color:#000">4.959</div>
<div class="t" style="left:591px;top:299px;width:43px;color:#000">GM.IBPW1</div>
<div class="t" style="left:640px;top:299px;width:74px;color:#000">Fuel</div>
<div class="t r" style="left:44px;top:318px;width:22px">1</div>
<div class="t" style="left:74px;top:318px;width:72px;color:#000">INJDC1</div>
<div class="t" style="left:152px;top:318px;width:173px;color:#000">Injector Duty Cycle Bank 1</div>
<div class="t r" style="left:329px;top:318px;width:57px;color:#000">1</div>
<div class="t" style="left:392px;top:318px;width:45px;color:#000">%</div>
<div class="t r" style="left:441px;top:318px;width:44px;color:#000">1</div>
<div class="t r" style="left:489px;top:318px;width:46px;color:#000">2</div>
<div class="t r" style="left:539px;top:318px;width:46px;color:#000">5</div>
<div class="t" style="left:591px;top:318px;width:43px;color:#000">CALC.INJDC1</div>
<div class="t" style="left:640px;top:318px;width:74px;color:#000">Fuel</div>
<div class="t r" style="left:44px;top:337px;width:22px">1</div>
<div class="t" style="left:74px;top:337px;width:72px;color:#000">IAT</div>
<div class="t" style="left:152px;top:337px;width:173px;color:#000">Intake Air Temperature</div>
<div class="t r" style="left:329px;top:337px;width:57px;color:#000">120</div>
<div class="t" style="left:392px;top:337px;width:45px;color:#000">&deg;F</div>
<div class="t r" style="left:441px;top:337px;width:44px;color:#000">120</div>
<div class="t r" style="left:489px;top:337px;width:46px;color:#000">120</div>
<div class="t r" style="left:539px;top:337px;width:46px;color:#000">120</div>
<div class="t" style="left:591px;top:337px;width:43px;color:#000">SAE.IAT</div>
<div class="t" style="left:640px;top:337px;width:74px;color:#000">Temperature</div>
<div class="t r" style="left:44px;top:356px;width:22px">1</div>
<div class="t" style="left:74px;top:356px;width:72px;color:#000">MAP</div>
<div class="t" style="left:152px;top:356px;width:173px;color:#000">Intake Manifold Absolute Pressure</div>
<div class="t r" style="left:329px;top:356px;width:57px;color:#000">6.1</div>
<div class="t" style="left:392px;top:356px;width:45px;color:#000">PSI</div>
<div class="t r" style="left:441px;top:356px;width:44px;color:#000">3.2</div>
<div class="t r" style="left:489px;top:356px;width:46px;color:#000">5.9</div>
<div class="t r" style="left:539px;top:356px;width:46px;color:#000">9.3</div>
<div class="t" style="left:591px;top:356px;width:43px;color:#000">SAE.MAP</div>
<div class="t" style="left:640px;top:356px;width:74px;color:#000">Air</div>
<div class="t r" style="left:44px;top:375px;width:22px">1</div>
<div class="t" style="left:74px;top:375px;width:72px;color:#000">SHIFT12</div>
<div class="t" style="left:152px;top:375px;width:173px;color:#000">Last 1-2 Shift Time</div>
<div class="t r" style="left:329px;top:375px;width:57px;color:#000">0.0</div>
<div class="t" style="left:392px;top:375px;width:45px;color:#000">Seconds</div>
<div class="t r" style="left:441px;top:375px;width:44px;color:#000">0.0</div>
<div class="t r" style="left:489px;top:375px;width:46px;color:#000">0.0</div>
<div class="t r" style="left:539px;top:375px;width:46px;color:#000">0.0</div>
<div class="t" style="left:591px;top:375px;width:43px;color:#000">GM.SHIFT12</div>
<div class="t" style="left:640px;top:375px;width:74px;color:#000">Transmission</div>
<div class="t r" style="left:44px;top:394px;width:22px">1</div>
<div class="t" style="left:74px;top:394px;width:72px;color:#000">LONGFT1</div>
<div class="t" style="left:152px;top:394px;width:173px;color:#000">Long Term Fuel Trim - Bank 1</div>
<div class="t r" style="left:329px;top:394px;width:57px;color:#000">-1.6</div>
<div class="t" style="left:392px;top:394px;width:45px;color:#000">%</div>
<div class="t r" style="left:441px;top:394px;width:44px;color:#000">-2.3</div>
<div class="t r" style="left:489px;top:394px;width:46px;color:#000">-0.8</div>
<div class="t r" style="left:539px;top:394px;width:46px;color:#000">3.1</div>
<div class="t" style="left:591px;top:394px;width:43px;color:#000">SAE.LONGFT1</div>
<div class="t" style="left:640px;top:394px;width:74px;color:#000">Fuel</div>
<div class="t r" style="left:44px;top:413px;width:22px">1</div>
<div class="t" style="left:74px;top:413px;width:72px;color:#000">LONGFT2</div>
<div class="t" style="left:152px;top:413px;width:173px;color:#000">Long Term Fuel Trim - Bank 2</div>
<div class="t r" style="left:329px;top:413px;width:57px;color:#000">-0.8</div>
<div class="t" style="left:392px;top:413px;width:45px;color:#000">%</div>
<div class="t r" style="left:441px;top:413px;width:44px;color:#000">-0.8</div>
<div class="t r" style="left:489px;top:413px;width:46px;color:#000">-0.3</div>
<div class="t r" style="left:539px;top:413px;width:46px;color:#000">4.7</div>
<div class="t" style="left:591px;top:413px;width:43px;color:#000">SAE.LONGFT2</div>
<div class="t" style="left:640px;top:413px;width:74px;color:#000">Fuel</div>
<div class="t r" style="left:44px;top:432px;width:22px">1</div>
<div class="t" style="left:74px;top:432px;width:72px;color:#000">MAFFREQ</div>
<div class="t" style="left:152px;top:432px;width:173px;color:#000">Mass Air Flow Raw Frequency</div>
<div class="t r" style="left:329px;top:432px;width:57px;color:#000">3028</div>
<div class="t" style="left:392px;top:432px;width:45px;color:#000">Hz</div>
<div class="t r" style="left:441px;top:432px;width:44px;color:#000">2811</div>
<div class="t r" style="left:489px;top:432px;width:46px;color:#000">3212</div>
<div class="t r" style="left:539px;top:432px;width:46px;color:#000">4689</div>
<div class="t" style="left:591px;top:432px;width:43px;color:#000">GM.MAFFREQ</div>
<div class="t" style="left:640px;top:432px;width:74px;color:#000">Air</div>
<div class="t r" style="left:44px;top:451px;width:22px">1</div>
<div class="t" style="left:74px;top:451px;width:72px;color:#000">POWER_FW</div>
<div class="t" style="left:152px;top:451px;width:173px;color:#000">Power At Flywheel</div>
<div class="t r" style="left:329px;top:451px;width:57px;color:#000">3</div>
<div class="t" style="left:392px;top:451px;width:45px;color:#000">HP</div>
<div class="t r" style="left:441px;top:451px;width:44px;color:#000">0</div>
<div class="t r" style="left:489px;top:451px;width:46px;color:#000">5</div>
<div class="t r" style="left:539px;top:451px;width:46px;color:#000">30</div>
<div class="t" style="left:591px;top:451px;width:43px;color:#000">CALC.POWER_FW</div>
<div class="t" style="left:640px;top:451px;width:74px;color:#000">Performance</div>
<div class="t r" style="left:44px;top:470px;width:22px">1</div>
<div class="t" style="left:74px;top:470px;width:72px;color:#000">POWER_RW</div>
<div class="t" style="left:152px;top:470px;width:173px;color:#000">Power At Rear Wheels</div>
<div class="t r" style="left:329px;top:470px;width:57px;color:#000">0</div>
<div class="t" style="left:392px;top:470px;width:45px;color:#000">HP</div>
<div class="t r" style="left:441px;top:470px;width:44px;color:#000">0</div>
<div class="t r" style="left:489px;top:470px;width:46px;color:#000">0</div>
<div class="t r" style="left:539px;top:470px;width:46px;color:#000">0</div>
<div class="t" style="left:591px;top:470px;width:43px;color:#000">CALC.POWER_RW</div>
<div class="t" style="left:640px;top:470px;width:74px;color:#000">Performance</div>
<div class="t r" style="left:44px;top:489px;width:22px">1</div>
<div class="t" style="left:74px;top:489px;width:72px;color:#000">DYNCYLAIR</div>
<div class="t" style="left:152px;top:489px;width:173px;color:#000">Predicted Grams of Air per Cylinder</div>
<div class="t r" style="left:329px;top:489px;width:57px;color:#000">0.19</div>
<div class="t" style="left:392px;top:489px;width:45px;color:#000">Grams/cyl</div>
<div class="t r" style="left:441px;top:489px;width:44px;color:#000">0.09</div>
<div class="t r" style="left:489px;top:489px;width:46px;color:#000">0.19</div>
<div class="t r" style="left:539px;top:489px;width:46px;color:#000">0.32</div>
<div class="t" style="left:591px;top:489px;width:43px;color:#000">GM.DYNCYLAIR</div>
<div class="t" style="left:640px;top:489px;width:74px;color:#000">Air</div>
<div class="t r" style="left:44px;top:508px;width:22px">1</div>
<div class="t" style="left:74px;top:508px;width:72px;color:#000">KR</div>
<div class="t" style="left:152px;top:508px;width:173px;color:#000">Retard Due to Knock</div>
<div class="t r" style="left:329px;top:508px;width:57px;color:#000">0.0</div>
<div class="t" style="left:392px;top:508px;width:45px;color:#000">Degrees</div>
<div class="t r" style="left:441px;top:508px;width:44px;color:#000">0.0</div>
<div class="t r" style="left:489px;top:508px;width:46px;color:#000">0.0</div>
<div class="t r" style="left:539px;top:508px;width:46px;color:#000">0.0</div>
<div class="t" style="left:591px;top:508px;width:43px;color:#000">GM.KR</div>
<div class="t" style="left:640px;top:508px;width:74px;color:#000">Spark</div>
<div class="t r" style="left:44px;top:527px;width:22px">1</div>
<div class="t" style="left:74px;top:527px;width:72px;color:#000">VSS</div>
<div class="t" style="left:152px;top:527px;width:173px;color:#000">Vehicle Speed Sensor</div>
<div class="t r" style="left:329px;top:527px;width:57px;color:#000">0</div>
<div class="t" style="left:392px;top:527px;width:45px;color:#000">MPH</div>
<div class="t r" style="left:441px;top:527px;width:44px;color:#000">0</div>
<div class="t r" style="left:489px;top:527px;width:46px;color:#000">0</div>
<div class="t r" style="left:539px;top:527px;width:46px;color:#000">0</div>
<div class="t" style="left:591px;top:527px;width:43px;color:#000">SAE.VSS</div>
<div class="t" style="left:640px;top:527px;width:74px;color:#000">Conditions</div>
<div class="t r" style="left:44px;top:546px;width:22px">1</div>
<div class="t" style="left:74px;top:546px;width:72px;color:#000">AFR_PLX1</div>
<div class="t" style="left:152px;top:546px;width:173px;color:#000">Wide Band AFR 1 - PLX</div>
<div class="t r" style="left:329px;top:546px;width:57px;color:#000">14.43</div>
<div class="t" style="left:392px;top:546px;width:45px;color:#000">AFR</div>
<div class="t r" style="left:441px;top:546px;width:44px;color:#000">14.42</div>
<div class="t r" style="left:489px;top:546px;width:46px;color:#000">14.43</div>
<div class="t r" style="left:539px;top:546px;width:46px;color:#000">14.45</div>
<div class="t" style="left:591px;top:546px;width:43px;color:#000">CALC.AFR_PLX1</div>
<div class="t" style="left:640px;top:546px;width:74px;color:#000">WO2-Analog</div>
<div class="t r" style="left:44px;top:565px;width:22px">1</div>
<div class="t" style="left:74px;top:565px;width:72px;color:#000">AFR_PLX1</div>
<div class="t" style="left:152px;top:565px;width:173px;color:#000">Wide Band AFR 1 - PLX</div>
<div class="t r" style="left:329px;top:565px;width:57px;color:#000">2.2</div>
<div class="t" style="left:392px;top:565px;width:45px;color:#000">V</div>
<div class="t r" style="left:441px;top:565px;width:44px;color:#000">2.2</div>
<div class="t r" style="left:489px;top:565px;width:46px;color:#000">2.2</div>
<div class="t r" style="left:539px;top:565px;width:46px;color:#000">2.2</div>
<div class="t" style="left:591px;top:565px;width:43px;color:#000">CALC.AFR_PLX1</div>
<div class="t" style="left:640px;top:565px;width:74px;color:#000">WO2-Analog</div>
<svg class="a" style="left:48px;top:7px" width="15" height="15" viewBox="0 0 15 15" shape-rendering="crispEdges"><rect width="15" height="15" fill="#000"/><rect x="1" y="1" width="5" height="1" fill="#00ff00"/><rect x="7" y="1" width="3" height="1" fill="#00ff00"/><rect x="1" y="3" width="2" height="1" fill="#00ff00"/><rect x="4" y="3" width="4" height="1" fill="#00ff00"/><rect x="9" y="3" width="3" height="1" fill="#00ff00"/><rect x="1" y="5" width="4" height="1" fill="#00ff00"/><rect x="6" y="5" width="4" height="1" fill="#00ff00"/><rect x="1" y="7" width="7" height="1" fill="#ff0000"/><rect x="9" y="7" width="3" height="1" fill="#ff0000"/><rect x="1" y="9" width="3" height="1" fill="#ffff00"/><rect x="5" y="9" width="7" height="1" fill="#ffff00"/><rect x="1" y="11" width="2" height="1" fill="#00ff00"/><rect x="4" y="11" width="4" height="1" fill="#00ff00"/><rect x="9" y="11" width="4" height="1" fill="#00ff00"/><rect x="1" y="13" width="4" height="1" fill="#00ff00"/><rect x="6" y="13" width="5" height="1" fill="#00ff00"/></svg><svg class="a" style="left:141px;top:7px" width="14" height="16" viewBox="0 0 14 16" shape-rendering="crispEdges"><rect x="0" y="0" width="1" height="16" fill="#808080"/><rect x="0" y="0" width="11" height="1" fill="#808080"/><rect x="1" y="1" width="12" height="14" fill="#fff"/><rect x="11" y="1" width="1" height="1" fill="#000"/><rect x="12" y="2" width="1" height="1" fill="#000"/><rect x="11" y="2" width="1" height="1" fill="#fff"/><rect x="13" y="3" width="1" height="13" fill="#000"/><rect x="1" y="15" width="13" height="1" fill="#000"/><rect x="6" y="3" width="3" height="1" fill="#000"/><rect x="6" y="5" width="5" height="1" fill="#000"/><rect x="6" y="7" width="5" height="1" fill="#000"/><rect x="6" y="9" width="5" height="1" fill="#000"/><rect x="6" y="11" width="5" height="1" fill="#000"/><rect x="6" y="13" width="5" height="1" fill="#000"/><rect x="5" y="1" width="1" height="1" fill="#00ff00"/><rect x="4" y="2" width="1" height="1" fill="#00ff00"/><rect x="5" y="2" width="1" height="1" fill="#00ff00"/><rect x="1" y="3" width="1" height="1" fill="#00ff00"/><rect x="3" y="3" width="1" height="1" fill="#00ff00"/><rect x="4" y="3" width="1" height="1" fill="#00ff00"/><rect x="1" y="4" width="1" height="1" fill="#00ff00"/><rect x="2" y="4" width="1" height="1" fill="#00ff00"/><rect x="3" y="4" width="1" height="1" fill="#00ff00"/><rect x="2" y="5" width="1" height="1" fill="#00ff00"/><rect x="5" y="5" width="1" height="1" fill="#00ff00"/><rect x="4" y="6" width="1" height="1" fill="#00ff00"/><rect x="5" y="6" width="1" height="1" fill="#00ff00"/><rect x="1" y="7" width="1" height="1" fill="#00ff00"/><rect x="3" y="7" width="1" height="1" fill="#00ff00"/><rect x="4" y="7" width="1" height="1" fill="#00ff00"/><rect x="1" y="8" width="1" height="1" fill="#00ff00"/><rect x="2" y="8" width="1" height="1" fill="#00ff00"/><rect x="3" y="8" width="1" height="1" fill="#00ff00"/><rect x="2" y="9" width="1" height="1" fill="#00ff00"/><rect x="5" y="9" width="1" height="1" fill="#00ff00"/><rect x="4" y="10" width="1" height="1" fill="#00ff00"/><rect x="5" y="10" width="1" height="1" fill="#00ff00"/><rect x="1" y="11" width="1" height="1" fill="#00ff00"/><rect x="3" y="11" width="1" height="1" fill="#00ff00"/><rect x="4" y="11" width="1" height="1" fill="#00ff00"/><rect x="1" y="12" width="1" height="1" fill="#00ff00"/><rect x="2" y="12" width="1" height="1" fill="#00ff00"/><rect x="3" y="12" width="1" height="1" fill="#00ff00"/><rect x="2" y="13" width="1" height="1" fill="#00ff00"/></svg><svg class="a" style="left:226px;top:6px" width="18" height="17" viewBox="0 0 18 17" shape-rendering="crispEdges"><rect x="1" y="4" width="15" height="13" fill="#000"/><rect x="2" y="5" width="13" height="11" fill="#9a9a9a"/><rect x="2" y="5" width="1" height="1" fill="#ffffff"/><rect x="2" y="6" width="1" height="1" fill="#ffff00"/><rect x="2" y="7" width="1" height="1" fill="#ffffff"/><rect x="2" y="8" width="1" height="1" fill="#ffff00"/><rect x="2" y="9" width="1" height="1" fill="#ffffff"/><rect x="2" y="10" width="1" height="1" fill="#ffff00"/><rect x="2" y="11" width="1" height="1" fill="#ffffff"/><rect x="2" y="12" width="1" height="1" fill="#ffff00"/><rect x="2" y="13" width="1" height="1" fill="#ffffff"/><rect x="2" y="14" width="1" height="1" fill="#ffff00"/><rect x="2" y="15" width="1" height="1" fill="#ffffff"/><rect x="5" y="5" width="1" height="1" fill="#ffffff"/><rect x="5" y="6" width="1" height="1" fill="#ffff00"/><rect x="5" y="7" width="1" height="1" fill="#ffffff"/><rect x="5" y="8" width="1" height="1" fill="#ffff00"/><rect x="5" y="9" width="1" height="1" fill="#ffffff"/><rect x="5" y="10" width="1" height="1" fill="#ffff00"/><rect x="5" y="11" width="1" height="1" fill="#ffffff"/><rect x="5" y="12" width="1" height="1" fill="#ffff00"/><rect x="5" y="13" width="1" height="1" fill="#ffffff"/><rect x="5" y="14" width="1" height="1" fill="#ffff00"/><rect x="5" y="15" width="1" height="1" fill="#ffffff"/><rect x="8" y="5" width="1" height="1" fill="#ffffff"/><rect x="8" y="6" width="1" height="1" fill="#ffff00"/><rect x="8" y="7" width="1" height="1" fill="#ffffff"/><rect x="8" y="8" width="1" height="1" fill="#ffff00"/><rect x="8" y="9" width="1" height="1" fill="#ffffff"/><rect x="8" y="10" width="1" height="1" fill="#ffff00"/><rect x="8" y="11" width="1" height="1" fill="#ffffff"/><rect x="8" y="12" width="1" height="1" fill="#ffff00"/><rect x="8" y="13" width="1" height="1" fill="#ffffff"/><rect x="8" y="14" width="1" height="1" fill="#ffff00"/><rect x="8" y="15" width="1" height="1" fill="#ffffff"/><rect x="11" y="5" width="1" height="1" fill="#ffffff"/><rect x="11" y="6" width="1" height="1" fill="#ffff00"/><rect x="11" y="7" width="1" height="1" fill="#ffffff"/><rect x="11" y="8" width="1" height="1" fill="#ffff00"/><rect x="11" y="9" width="1" height="1" fill="#ffffff"/><rect x="11" y="10" width="1" height="1" fill="#ffff00"/><rect x="11" y="11" width="1" height="1" fill="#ffffff"/><rect x="11" y="12" width="1" height="1" fill="#ffff00"/><rect x="11" y="13" width="1" height="1" fill="#ffffff"/><rect x="11" y="14" width="1" height="1" fill="#ffff00"/><rect x="11" y="15" width="1" height="1" fill="#ffffff"/><rect x="14" y="5" width="1" height="1" fill="#ffffff"/><rect x="14" y="6" width="1" height="1" fill="#ffff00"/><rect x="14" y="7" width="1" height="1" fill="#ffffff"/><rect x="14" y="8" width="1" height="1" fill="#ffff00"/><rect x="14" y="9" width="1" height="1" fill="#ffffff"/><rect x="14" y="10" width="1" height="1" fill="#ffff00"/><rect x="14" y="11" width="1" height="1" fill="#ffffff"/><rect x="14" y="12" width="1" height="1" fill="#ffff00"/><rect x="14" y="13" width="1" height="1" fill="#ffffff"/><rect x="14" y="14" width="1" height="1" fill="#ffff00"/><rect x="14" y="15" width="1" height="1" fill="#ffffff"/><rect x="3" y="8" width="2" height="8" fill="#ff0000"/><rect x="9" y="1" width="6" height="1" fill="#000"/><rect x="9" y="2" width="6" height="4" fill="#d8d8d8"/><rect x="9" y="6" width="6" height="1" fill="#000"/><rect x="8" y="2" width="1" height="1" fill="#000"/><rect x="7" y="3" width="1" height="1" fill="#000"/><rect x="9" y="3" width="1" height="1" fill="#000"/><rect x="6" y="4" width="1" height="1" fill="#000"/><rect x="8" y="4" width="1" height="1" fill="#000"/><rect x="5" y="5" width="1" height="1" fill="#000"/><rect x="7" y="5" width="1" height="1" fill="#000"/><rect x="9" y="5" width="1" height="1" fill="#000"/><rect x="4" y="6" width="1" height="1" fill="#000"/><rect x="6" y="6" width="1" height="1" fill="#000"/><rect x="8" y="6" width="1" height="1" fill="#000"/><rect x="10" y="6" width="1" height="1" fill="#000"/><rect x="5" y="7" width="1" height="1" fill="#000"/><rect x="7" y="7" width="1" height="1" fill="#000"/><rect x="9" y="7" width="1" height="1" fill="#000"/><rect x="11" y="7" width="1" height="1" fill="#000"/><rect x="6" y="8" width="1" height="1" fill="#000"/><rect x="8" y="8" width="1" height="1" fill="#000"/><rect x="10" y="8" width="1" height="1" fill="#000"/><rect x="7" y="9" width="1" height="1" fill="#000"/><rect x="9" y="9" width="1" height="1" fill="#000"/><rect x="8" y="10" width="1" height="1" fill="#000"/><rect x="8" y="3" width="1" height="1" fill="#fff"/><rect x="7" y="4" width="1" height="1" fill="#fff"/><rect x="9" y="4" width="1" height="1" fill="#fff"/><rect x="6" y="5" width="1" height="1" fill="#fff"/><rect x="8" y="5" width="1" height="1" fill="#fff"/><rect x="10" y="5" width="1" height="1" fill="#fff"/><rect x="5" y="6" width="1" height="1" fill="#fff"/><rect x="7" y="6" width="1" height="1" fill="#fff"/><rect x="9" y="6" width="1" height="1" fill="#fff"/><rect x="6" y="7" width="1" height="1" fill="#fff"/><rect x="8" y="7" width="1" height="1" fill="#fff"/><rect x="10" y="7" width="1" height="1" fill="#fff"/><rect x="7" y="8" width="1" height="1" fill="#fff"/><rect x="9" y="8" width="1" height="1" fill="#fff"/><rect x="8" y="9" width="1" height="1" fill="#fff"/><rect x="15" y="1" width="2" height="7" fill="#000080"/></svg><svg class="a" style="left:383px;top:8px" width="17" height="15" viewBox="0 0 17 15"><polygon points="4,0 12,0 16,4 16,10 12,14 4,14 0,10 0,4" fill="#000" stroke="#808080" stroke-width="1"/><line x1="7.5" y1="1.5" x2="7.5" y2="4" stroke="#00ff00" stroke-width="1.2"/><line x1="3" y1="3" x2="5" y2="5" stroke="#00ff00" stroke-width="1.2"/><line x1="1.5" y1="7.5" x2="4" y2="7.5" stroke="#00ff00" stroke-width="1.2"/><line x1="12.5" y1="3" x2="10.5" y2="5" stroke="#00ff00" stroke-width="1.2"/><line x1="11.5" y1="7.5" x2="14.5" y2="7.5" stroke="#ff0000" stroke-width="1.2"/><line x1="10" y1="9.5" x2="12.5" y2="12" stroke="#ff0000" stroke-width="1.2"/><line x1="7" y1="8" x2="10" y2="5" stroke="#ffffff" stroke-width="1.2"/></svg><svg class="a" style="left:497px;top:8px" width="14" height="14" viewBox="0 0 14 14" shape-rendering="crispEdges"><rect width="14" height="14" fill="#000"/><rect x="5" y="5" width="8" height="8" fill="#808080"/><rect x="1" y="1" width="3" height="3" fill="#ffffff"/><rect x="5" y="1" width="2" height="3" fill="#ffffff"/><rect x="8" y="1" width="2" height="3" fill="#ffffff"/><rect x="11" y="1" width="2" height="3" fill="#ffffff"/><rect x="1" y="5" width="3" height="2" fill="#ffffff"/><rect x="5" y="5" width="2" height="2" fill="#00ff00"/><rect x="8" y="5" width="2" height="2" fill="#00ff00"/><rect x="11" y="5" width="2" height="2" fill="#ffff00"/><rect x="1" y="8" width="3" height="2" fill="#ffffff"/><rect x="5" y="8" width="2" height="2" fill="#00ff00"/><rect x="8" y="8" width="2" height="2" fill="#ffff00"/><rect x="11" y="8" width="2" height="2" fill="#ff0000"/><rect x="1" y="11" width="3" height="2" fill="#ffffff"/><rect x="5" y="11" width="2" height="2" fill="#ffff00"/><rect x="8" y="11" width="2" height="2" fill="#ff0000"/><rect x="11" y="11" width="2" height="2" fill="#ff0000"/></svg><svg class="a" style="left:581px;top:6px" width="19" height="17" viewBox="0 0 19 17"><line x1="4" y1="4" x2="11" y2="7" stroke="#000" stroke-width="1.2"/><line x1="11" y1="7" x2="16" y2="3" stroke="#000" stroke-width="1.2"/><line x1="4" y1="4" x2="10" y2="13" stroke="#000" stroke-width="1.2"/><line x1="16" y1="3" x2="12" y2="13" stroke="#000" stroke-width="1.2"/><circle cx="4" cy="4" r="2" fill="#ff0000" stroke="#000" stroke-width="1"/><circle cx="11" cy="7" r="2" fill="#ff0000" stroke="#000" stroke-width="1"/><circle cx="16" cy="3" r="2" fill="#ff0000" stroke="#000" stroke-width="1"/><circle cx="10.5" cy="13.5" r="3" fill="#ff0000" stroke="#000" stroke-width="1"/><circle cx="10.5" cy="13.5" r="0.8" fill="#800000"/></svg>
<svg class="a" style="left:306px;top:6px" width="15" height="14" viewBox="0 0 15 14" shape-rendering="crispEdges"><rect width="15" height="14" fill="#000"/><rect x="1" y="1" width="13" height="12" fill="#ffffff"/><rect x="1" y="1" width="13" height="2" fill="#c8c8c8"/><rect x="1" y="3" width="1" height="1" fill="#ffff00"/><rect x="3" y="3" width="1" height="1" fill="#ffff00"/><rect x="5" y="3" width="1" height="1" fill="#ffff00"/><rect x="7" y="3" width="1" height="1" fill="#ffff00"/><rect x="9" y="3" width="1" height="1" fill="#ffff00"/><rect x="11" y="3" width="1" height="1" fill="#ffff00"/><rect x="13" y="3" width="1" height="1" fill="#ffff00"/><rect x="2" y="4" width="1" height="1" fill="#ffff00"/><rect x="4" y="4" width="1" height="1" fill="#ffff00"/><rect x="6" y="4" width="1" height="1" fill="#ffff00"/><rect x="8" y="4" width="1" height="1" fill="#ffff00"/><rect x="10" y="4" width="1" height="1" fill="#ffff00"/><rect x="12" y="4" width="1" height="1" fill="#ffff00"/><rect x="1" y="5" width="1" height="1" fill="#ffff00"/><rect x="3" y="5" width="1" height="1" fill="#ffff00"/><rect x="5" y="5" width="1" height="1" fill="#ffff00"/><rect x="7" y="5" width="1" height="1" fill="#ffff00"/><rect x="9" y="5" width="1" height="1" fill="#ffff00"/><rect x="11" y="5" width="1" height="1" fill="#ffff00"/><rect x="13" y="5" width="1" height="1" fill="#ffff00"/><rect x="2" y="6" width="1" height="1" fill="#ffff00"/><rect x="4" y="6" width="1" height="1" fill="#ffff00"/><rect x="6" y="6" width="1" height="1" fill="#ffff00"/><rect x="8" y="6" width="1" height="1" fill="#ffff00"/><rect x="10" y="6" width="1" height="1" fill="#ffff00"/><rect x="12" y="6" width="1" height="1" fill="#ffff00"/><rect x="1" y="7" width="1" height="1" fill="#ffff00"/><rect x="3" y="7" width="1" height="1" fill="#ffff00"/><rect x="5" y="7" width="1" height="1" fill="#ffff00"/><rect x="7" y="7" width="1" height="1" fill="#ffff00"/><rect x="9" y="7" width="1" height="1" fill="#ffff00"/><rect x="11" y="7" width="1" height="1" fill="#ffff00"/><rect x="13" y="7" width="1" height="1" fill="#ffff00"/><rect x="2" y="8" width="1" height="1" fill="#ffff00"/><rect x="4" y="8" width="1" height="1" fill="#ffff00"/><rect x="6" y="8" width="1" height="1" fill="#ffff00"/><rect x="8" y="8" width="1" height="1" fill="#ffff00"/><rect x="10" y="8" width="1" height="1" fill="#ffff00"/><rect x="12" y="8" width="1" height="1" fill="#ffff00"/><rect x="1" y="9" width="1" height="1" fill="#ffff00"/><rect x="3" y="9" width="1" height="1" fill="#ffff00"/><rect x="5" y="9" width="1" height="1" fill="#ffff00"/><rect x="7" y="9" width="1" height="1" fill="#ffff00"/><rect x="9" y="9" width="1" height="1" fill="#ffff00"/><rect x="11" y="9" width="1" height="1" fill="#ffff00"/><rect x="13" y="9" width="1" height="1" fill="#ffff00"/><rect x="2" y="10" width="1" height="1" fill="#ffff00"/><rect x="4" y="10" width="1" height="1" fill="#ffff00"/><rect x="6" y="10" width="1" height="1" fill="#ffff00"/><rect x="8" y="10" width="1" height="1" fill="#ffff00"/><rect x="10" y="10" width="1" height="1" fill="#ffff00"/><rect x="12" y="10" width="1" height="1" fill="#ffff00"/><rect x="1" y="11" width="1" height="1" fill="#ffff00"/><rect x="3" y="11" width="1" height="1" fill="#ffff00"/><rect x="5" y="11" width="1" height="1" fill="#ffff00"/><rect x="7" y="11" width="1" height="1" fill="#ffff00"/><rect x="9" y="11" width="1" height="1" fill="#ffff00"/><rect x="11" y="11" width="1" height="1" fill="#ffff00"/><rect x="13" y="11" width="1" height="1" fill="#ffff00"/><rect x="2" y="12" width="1" height="1" fill="#ffff00"/><rect x="4" y="12" width="1" height="1" fill="#ffff00"/><rect x="6" y="12" width="1" height="1" fill="#ffff00"/><rect x="8" y="12" width="1" height="1" fill="#ffff00"/><rect x="10" y="12" width="1" height="1" fill="#ffff00"/><rect x="12" y="12" width="1" height="1" fill="#ffff00"/><rect x="2" y="4" width="2" height="2" fill="#000"/><rect x="3" y="4" width="1" height="1" fill="#404040"/><rect x="2" y="7" width="2" height="2" fill="#000"/><rect x="3" y="7" width="1" height="1" fill="#404040"/><rect x="2" y="10" width="2" height="2" fill="#000"/><rect x="3" y="10" width="1" height="1" fill="#404040"/><rect x="5" y="4" width="2" height="2" fill="#000"/><rect x="6" y="4" width="1" height="1" fill="#404040"/><rect x="5" y="7" width="2" height="2" fill="#000"/><rect x="6" y="7" width="1" height="1" fill="#404040"/><rect x="5" y="10" width="2" height="2" fill="#000"/><rect x="6" y="10" width="1" height="1" fill="#404040"/><rect x="8" y="4" width="2" height="2" fill="#000"/><rect x="9" y="4" width="1" height="1" fill="#404040"/><rect x="8" y="7" width="2" height="2" fill="#000"/><rect x="9" y="7" width="1" height="1" fill="#404040"/><rect x="8" y="10" width="2" height="2" fill="#000"/><rect x="9" y="10" width="1" height="1" fill="#404040"/><rect x="11" y="4" width="2" height="2" fill="#000"/><rect x="12" y="4" width="1" height="1" fill="#404040"/><rect x="11" y="7" width="2" height="2" fill="#000"/><rect x="12" y="7" width="1" height="1" fill="#404040"/><rect x="11" y="10" width="2" height="2" fill="#000"/><rect x="12" y="10" width="1" height="1" fill="#404040"/></svg>
<div class="a" style="left:31px;top:64px;width:2px;height:1px;background:#3a3a3a"></div><div class="a" style="left:31px;top:65px;width:2px;height:1px;background:#000"></div>
</body></html>
